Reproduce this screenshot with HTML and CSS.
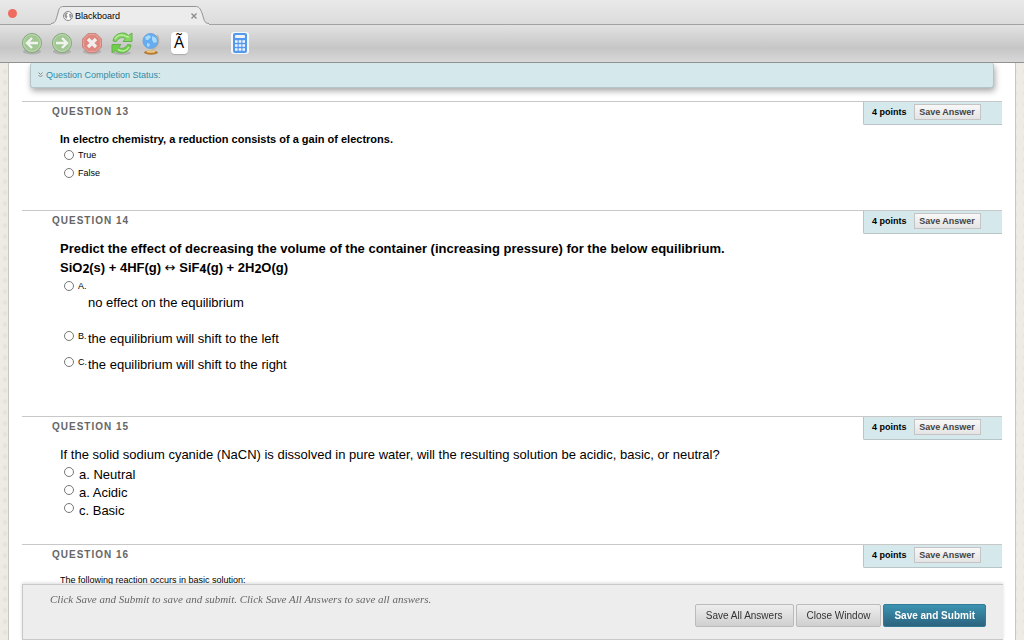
FILE: index.html
```html
<!DOCTYPE html>
<html lang="en">
<head>
    <meta charset="UTF-8">
    <meta name="viewport" content="width=device-width, initial-scale=1.0">
    <title>Blackboard</title>
    <link rel="stylesheet" href="styles.css">
</head>
<body>

    <header class="browser">
        <div class="tab-bar">
            <span class="close-dot"></span>
            <div class="tab">
                <svg class="tab-shape" width="158" height="19" viewBox="0 0 158 19">
                    <path d="M0 19V18C5 18 5 13 7 7C8 2 9 .5 13 .5H144C148 .5 149 2 151 7C153 13 153 18 158 18V19Z" fill="#ececec"/>
                    <path d="M0 17.5C5 17.5 5 13 7 7C8 2 9 .5 13 .5H144C148 .5 149 2 151 7C153 13 153 17.5 158 17.5" fill="none" stroke="#939393"/>
                </svg>
                <svg class="tab-icon" width="10" height="10" viewBox="0 0 10 10">
                    <circle cx="5" cy="5" r="4.500" fill="#fff" stroke="#888"/>
                    <path d="M1.500 3L4 1.200L5 2.500L3.500 3.500L4.500 5.500L3.500 8L1.500 5.500ZM6 3L8 2.500L9 5L7.500 8L6.500 6Z" fill="#999"/>
                </svg>
                <span class="tab-title">Blackboard</span>
                <svg class="tab-close" width="6" height="6" viewBox="0 0 6 6">
                    <path d="M.5 .5L5.500 5.500M5.500 .5L.5 5.500" stroke="#8c8c8c" stroke-width="1.400"/>
                </svg>
            </div>
        </div>

        <!-- Toolbar -->
        <div class="toolbar">
            <button class="tool" aria-label="Back">
                <svg width="22" height="24" viewBox="0 0 22 24">
                    <ellipse cx="11" cy="19.500" rx="9" ry="3" fill="#888" opacity=".4"/>
                    <circle cx="11" cy="11" r="9.500" fill="#a2c795" stroke="#82a977"/>
                    <circle cx="11" cy="11" r="8.400" fill="none" stroke="#bfdab5"/>
                    <path d="M17 11H6M11 6L6 11L11 16" fill="none" stroke="#f0f4ee" stroke-width="2.400"/>
                </svg>
            </button>
            <button class="tool" aria-label="Forward">
                <svg width="22" height="24" viewBox="0 0 22 24">
                    <ellipse cx="11" cy="19.500" rx="9" ry="3" fill="#888" opacity=".4"/>
                    <circle cx="11" cy="11" r="9.500" fill="#a2c795" stroke="#82a977"/>
                    <circle cx="11" cy="11" r="8.400" fill="none" stroke="#bfdab5"/>
                    <path d="M5 11H16M11 6L16 11L11 16" fill="none" stroke="#f0f4ee" stroke-width="2.400"/>
                </svg>
            </button>
            <button class="tool" aria-label="Stop">
                <svg width="22" height="24" viewBox="0 0 22 24">
                    <ellipse cx="11" cy="19.500" rx="9" ry="3" fill="#888" opacity=".4"/>
                    <path d="M7 1.500H15L20.500 7V15L15 20.500H7L1.500 15V7Z" fill="#dd877f" stroke="#c98781"/>
                    <path d="M7.500 2.700H14.500L19.300 7.500V14.500L14.500 19.300H7.500L2.700 14.500V7.500Z" fill="none" stroke="#eba69f"/>
                    <path d="M7 7L15 15M15 7L7 15" stroke="#f2eeee" stroke-width="3.400"/>
                </svg>
            </button>
            <button class="tool" aria-label="Reload">
                <svg width="22" height="24" viewBox="0 0 22 24">
                    <ellipse cx="11" cy="21" rx="9" ry="2" fill="#999" opacity=".5"/>
                    <path d="M2 9C3 3 8 1 12 1C14.500 1 16 2 17.500 3.500L21 1V9.500H12L14.500 6.500C11 4.500 7 6 5.500 9.500Z" fill="#85d663" stroke="#68b04f"/>
                    <path d="M20 13C19 19 14 21 10 21C7.500 21 6 20 4.500 18.500L1 21V12.500H10L7.500 15.500C11 17.500 15 16 16.500 12.500Z" fill="#6ed04a" stroke="#68b04f"/>
                    <path d="M4 7C6 3 11 1.500 15 4.500L18 5M18 15C16 19 11 20 7 17.500" fill="none" stroke="#b9ee9d" stroke-width="1.500"/>
                </svg>
            </button>
            <button class="tool narrow" aria-label="Home">
                <svg width="20" height="24" viewBox="0 0 20 24">
                    <ellipse cx="10" cy="20.500" rx="7" ry="2.200" fill="#b77a35"/>
                    <ellipse cx="10" cy="19.500" rx="4.500" ry="1.200" fill="#efcc86"/>
                    <path d="M16 3C19 7 18 14 13 17L10 19" fill="none" stroke="#c7b8a0" stroke-width="1.500"/>
                    <circle cx="9.500" cy="9" r="7.500" fill="#65adf0" stroke="#6ba5e0"/>
                    <path d="M4 5L8 3L10 5L7 8L5 8ZM11 4L15 6L16 10L13 11L11 8ZM6 11L9 12L8 15L6 14Z" fill="#a9dbff"/>
                </svg>
            </button>
            <button class="tool narrow" aria-label="Special characters">
                <span class="char-key">Ã</span>
            </button>
            <button class="tool calculator" aria-label="Calculator">
                <svg width="20" height="24" viewBox="0 0 20 24">
                    <rect x="1" y="0" width="18" height="22" rx="3" fill="#f5f7fa"/>
                    <rect x="3" y="1" width="14" height="20" rx="2" fill="#5499f0"/>
                    <rect x="5" y="3" width="10" height="3" rx="1" fill="#f4f4f4"/>
                    <path d="M5 9.500H15M5 13.500H15M5 17.500H15" stroke="#f0f5fc" stroke-width="2.500" stroke-dasharray="2.600 1.100"/>
                </svg>
            </button>
        </div>
    </header>

    <main class="page">
        <div class="completion">
            <svg width="5" height="6" viewBox="0 0 5 6">
                <path d="M.5 .5L2.500 2.500L4.500 .5M.5 3L2.500 5L4.500 3" fill="none" stroke="#888"/>
            </svg>
            <a href="#">Question Completion Status:</a>
        </div>

        <!-- Question 13 -->
        <section class="question true-false">
            <div class="question-head">
                <h3>QUESTION 13</h3>
                <div class="points"><strong>4 points</strong><button class="save">Save Answer</button></div>
            </div>
            <p class="prompt small bold">In electro chemistry, a reduction consists of a gain of electrons.</p>
            <label class="option"><input type="radio" name="q13">True</label>
            <label class="option"><input type="radio" name="q13">False</label>
        </section>

        <!-- Question 14 -->
        <section class="question lettered">
            <div class="question-head">
                <h3>QUESTION 14</h3>
                <div class="points"><strong>4 points</strong><button class="save">Save Answer</button></div>
            </div>
            <p class="prompt bold">Predict the effect of decreasing the volume of the container (increasing pressure) for the below equilibrium.<br>SiO<sub>2</sub>(s) + 4HF(g) <span class="arrow">↔</span> SiF<sub>4</sub>(g) + 2H<sub>2</sub>O(g)</p>
            <label class="option stacked"><input type="radio" name="q14"><span class="letter">A.</span><span class="answer">no effect on the equilibrium</span></label>
            <label class="option"><input type="radio" name="q14"><span class="letter">B.</span><span class="answer">the equilibrium will shift to the left</span></label>
            <label class="option"><input type="radio" name="q14"><span class="letter">C.</span><span class="answer">the equilibrium will shift to the right</span></label>
        </section>

        <!-- Question 15 -->
        <section class="question plain">
            <div class="question-head">
                <h3>QUESTION 15</h3>
                <div class="points"><strong>4 points</strong><button class="save">Save Answer</button></div>
            </div>
            <p class="prompt">If the solid sodium cyanide (NaCN) is dissolved in pure water, will the resulting solution be acidic, basic, or neutral?</p>
            <label class="option"><input type="radio" name="q15">a. Neutral</label>
            <label class="option"><input type="radio" name="q15">a. Acidic</label>
            <label class="option"><input type="radio" name="q15">c. Basic</label>
        </section>

        <!-- Question 16 -->
        <section class="question">
            <div class="question-head">
                <h3>QUESTION 16</h3>
                <div class="points"><strong>4 points</strong><button class="save">Save Answer</button></div>
            </div>
            <p class="prompt tiny">The following reaction occurs in basic solution:</p>
        </section>
    </main>

    <footer class="submit-bar">
        <p>Click Save and Submit to save and submit. Click Save All Answers to save all answers.</p>
        <div class="actions">
            <button>Save All Answers</button>
            <button>Close Window</button>
            <button class="primary">Save and Submit</button>
        </div>
    </footer>

</body>
</html>
```
FILE: styles.css
```css
* {
    box-sizing: border-box;
}
body {
    display: flex;
    flex-direction: column;
    height: 100vh;
    margin: 0;
    overflow: hidden;
    font-family: "Liberation Sans", Arial, sans-serif;
    font-size: 9px;
    color: #000;
    background-color: #eeebe4;
    background-image: radial-gradient(#e6e2da 1px, transparent 3px);
    background-size: 10px 11px;
}
h3, p {
    margin: 0;
}
button {
    font-family: inherit;
    cursor: pointer;
}

/* Browser window */
.browser {
    flex: none;
    height: 63px;
    background: linear-gradient(#e9e9e9, #dcdcdc 24px, #e2e2e2 25px, #c6c6c6 48px, #d8d8d8 62px);
    border-bottom: 1px solid #919191;
}
.tab-bar {
    display: flex;
    align-items: flex-end;
    height: 25px;
    padding-left: 8px;
    border-bottom: 1px solid #a2a2a2;
}
.close-dot {
    width: 9px;
    height: 9px;
    margin: 0 34px 6px 0;
    border-radius: 50%;
    background: #ee6b60;
}
.tab {
    position: relative;
    display: flex;
    align-items: center;
    width: 158px;
    height: 18px;
    padding: 1px 12px 0;
}
.tab-shape {
    position: absolute;
    left: 0;
    top: 0;
}
.tab-icon, .tab-title, .tab-close {
    position: relative;
}
.tab-title {
    margin-left: 2px;
}
.tab-close {
    margin-left: auto;
}
.toolbar {
    display: flex;
    align-items: center;
    gap: 8px;
    height: 37px;
    padding: 0 0 0 21px;
}
.tool {
    display: flex;
    justify-content: center;
    width: 22px;
    height: 24px;
    padding: 0;
    border: none;
    background: none;
}
.tool.narrow {
    width: 20px;
}
.char-key {
    width: 17px;
    height: 22px;
    border-radius: 4px;
    background: #fff;
    box-shadow: 0 1px 1px #aaa;
    font: 16px/21px "Open Sans", sans-serif;
}
.calculator {
    margin-left: 32px;
}

/* Test page */
.page {
    flex: 1;
    min-height: 0;
    margin: 0 8px;
    padding: 0 13px;
    overflow: hidden;
    background: #fff;
    border: 1px solid #c9c6c0;
    border-width: 0 1px;
}
.completion {
    display: flex;
    align-items: center;
    gap: 3px;
    height: 25px;
    margin: 0 8px 13px;
    padding-left: 7px;
    background: #d5e8ec;
    border: 1px solid #b4c4c7;
    border-top: none;
    border-radius: 3px;
    box-shadow: 1px 3px 6px rgba(0, 0, 0, 0.35);
}
.completion a {
    color: #328ba8;
    text-decoration: none;
}
.question {
    border-top: 1px solid #c8c8c8;
}
.question-head {
    display: flex;
    justify-content: space-between;
    height: 28px;
    padding-left: 30px;
}
.question-head h3 {
    font-size: 10px;
    line-height: 20px;
    letter-spacing: 1px;
    color: #666;
}
.points {
    display: flex;
    align-items: center;
    gap: 7px;
    width: 139px;
    height: 23px;
    padding: 0 0 2px 8px;
    background: #d5e8ec;
    border-left: 1px solid #b8c5c7;
    border-bottom: 1px solid #b8c5c7;
    border-radius: 0 0 0 2px;
}
.save {
    width: 67px;
    height: 16px;
    padding: 0;
    font-size: 9px;
    font-weight: bold;
    color: #444;
    background: linear-gradient(#f8f8f8, #e4e4e4);
    border: 1px solid #c4c4c4;
}
.prompt {
    padding-left: 38px;
    font-size: 13px;
    line-height: 19px;
}
.prompt.small {
    font-size: 11px;
}
.prompt.tiny {
    font-size: 9px;
    line-height: 14px;
}
.bold {
    font-weight: bold;
}
sub {
    font-family: "Open Sans", sans-serif;
    font-size: 12px;
    line-height: 0;
    vertical-align: -1px;
}
.arrow {
    font-family: "DejaVu Sans", sans-serif;
    font-weight: normal;
    line-height: 0;
}

/* Answers */
.option {
    display: flex;
    align-items: center;
    padding-left: 42px;
}
input[type="radio"] {
    appearance: none;
    flex: none;
    width: 10px;
    height: 10px;
    margin: 0 4px 0 0;
    border: 1px solid #777;
    border-radius: 50%;
    background: #fff;
}
.true-false {
    height: 109px;
}
.true-false .option {
    height: 18px;
}
.true-false .prompt {
    margin-bottom: -3px;
}
.lettered {
    height: 206px;
}
.lettered .option {
    height: 26px;
}
.lettered .letter {
    width: 10px;
}
.lettered .answer {
    padding-top: 4px;
    font-size: 13px;
}
.lettered .stacked {
    flex-wrap: wrap;
    align-content: flex-start;
    height: 46px;
    padding-top: 4px;
}
.stacked .answer {
    width: 100%;
    padding-left: 24px;
}
.plain {
    height: 128px;
}
.plain .prompt {
    margin-bottom: 1px;
}
.plain .option {
    height: 18px;
    font-size: 13px;
}
.plain .option input {
    margin: 0 5px 5px 0;
}

/* Submit bar */
.submit-bar {
    position: fixed;
    left: 22px;
    right: 21px;
    bottom: 0;
    height: 56px;
    padding: 8px 17px 0 27px;
    background: #ededed;
    border: 1px solid #c8c8c8;
    border-right: none;
    box-shadow: 0 -1px 3px rgba(0, 0, 0, 0.15);
}
.submit-bar p {
    font-family: "Liberation Serif", Georgia, serif;
    font-size: 11px;
    font-style: italic;
    line-height: 12px;
    color: #666;
}
.actions {
    display: flex;
    justify-content: flex-end;
    gap: 2px;
    margin-top: -1px;
}
.actions button {
    height: 23px;
    padding: 0 10px;
    font-size: 10px;
    color: #333;
    background: linear-gradient(#eee, #cfcfcf);
    border: 1px solid #bbb;
    border-radius: 2px;
}
.actions .primary {
    font-weight: bold;
    color: #fff;
    background: linear-gradient(#3c93b1, #2b637e);
    border-color: #347b96;
}
```
